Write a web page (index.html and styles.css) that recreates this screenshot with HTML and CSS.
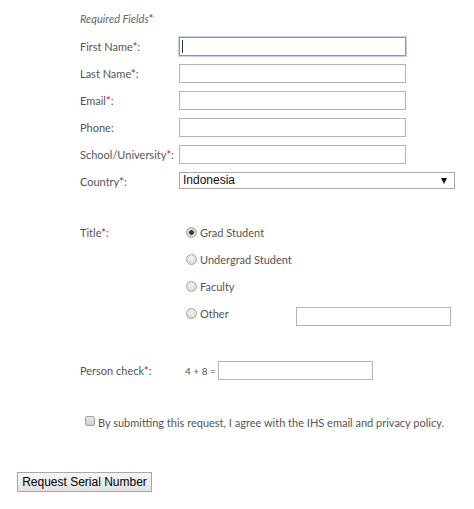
FILE: index.html
```html
<!DOCTYPE html>
<html>
<head>
<meta charset="utf-8">
<link rel="stylesheet" href="styles.css">
</head>
<body>
<div class="page">
  <div class="form">
    <p class="req">Required Fields<span class="ast">*</span></p>
    <div class="row"><label class="lbl">First Name<span class="ast">*</span>:</label><span class="focus-wrap"><input class="txt focused" type="text"></span></div>
    <div class="row"><label class="lbl">Last Name<span class="ast">*</span>:</label><input class="txt" type="text"></div>
    <div class="row"><label class="lbl">Email<span class="ast">*</span>:</label><input class="txt" type="text"></div>
    <div class="row"><label class="lbl">Phone:</label><input class="txt" type="text"></div>
    <div class="row"><label class="lbl">School/University<span class="ast">*</span>:</label><input class="txt" type="text"></div>
    <div class="row"><label class="lbl">Country<span class="ast">*</span>:</label><span class="sel-wrap"><select class="sel"><option>Indonesia</option></select></span></div>

    <div class="title-block">
      <div class="title-lbl">Title<span class="ast">*</span>:</div>
      <div class="opts">
        <label class="opt"><input type="radio" name="title" class="radio" checked>Grad Student</label>
        <label class="opt"><input type="radio" name="title" class="radio">Undergrad Student</label>
        <label class="opt"><input type="radio" name="title" class="radio">Faculty</label>
        <div class="opt other"><label class="other-lbl"><input type="radio" name="title" class="radio">Other</label><input class="txt other-txt" type="text"></div>
      </div>
    </div>

    <div class="row check-row"><label class="lbl sum-lbl">Person check<span class="ast">*</span>:</label><span class="sum">4 + 8 =</span><input class="txt sum-txt" type="text"></div>

    <label class="agree"><input type="checkbox" class="cb">By submitting this request, I agree with the IHS email and privacy policy.</label>
  </div>
  <button class="btn" type="button">Request Serial Number</button>
</div>
</body>
</html>
```
FILE: styles.css
```css
html, body {
  margin: 0;
  padding: 0;
  background: #fff;
}

.page {
  padding: 12px 0 0 17px;
  font-family: Lato, "Open Sans", sans-serif;
  font-size: 11px;
  color: #555;
}

.form {
  padding-left: 63px;
}

.req {
  margin: 0 0 11px 0;
  height: 14px;
  line-height: 14px;
  font-style: italic;
  color: #666;
}

.ast {
  color: #d0021b;
  font-style: normal;
}

.row {
  display: flex;
  align-items: center;
  height: 19px;
  margin-bottom: 8px;
}

.lbl {
  width: 99px;
  flex: none;
  line-height: 19px;
  white-space: nowrap;
}

.txt {
  box-sizing: border-box;
  width: 227px;
  height: 19px;
  margin: 0;
  padding: 0 3px;
  border: 1px solid #b4b4b4;
  background: #fff;
  outline: none;
  font: 12px "Liberation Sans", Arial, sans-serif;
}

.focus-wrap {
  position: relative;
  display: block;
  height: 19px;
}

.focused {
  border-color: #7d98cf;
  box-shadow: 0 0 0 1px #c6d2ec;
}

.focus-wrap::after {
  content: "";
  position: absolute;
  left: 3px;
  top: 3px;
  width: 1px;
  height: 13px;
  background: #333;
}

.sel-wrap {
  position: relative;
  display: block;
  align-self: flex-start;
  height: 17px;
}

.sel {
  -webkit-appearance: none;
  appearance: none;
  box-sizing: border-box;
  width: 276px;
  height: 17px;
  margin: 0;
  padding: 0 0 0 3px;
  border: 1px solid #a9a9a9;
  border-radius: 0;
  background: #fff;
  color: #111;
  font: 12px "Liberation Sans", Arial, sans-serif;
  line-height: 15px;
  outline: none;
}

.sel-wrap::after {
  content: "";
  position: absolute;
  right: 8px;
  top: 6px;
  width: 0;
  height: 0;
  border-left: 3px solid transparent;
  border-right: 3px solid transparent;
  border-top: 6px solid #111;
}

.title-block {
  display: flex;
  margin-top: 28px;
}

.title-lbl {
  width: 106px;
  flex: none;
  line-height: 27px;
}

.opts {
  display: flex;
  flex-direction: column;
}

.opt {
  display: flex;
  align-items: center;
  height: 27px;
  white-space: nowrap;
}

.radio {
  -webkit-appearance: none;
  appearance: none;
  box-sizing: border-box;
  width: 11px;
  height: 11px;
  margin: 0 3px 0 0;
  border: 1px solid #a6a6a6;
  border-radius: 50%;
  background: radial-gradient(circle at 50% 35%, #f4f4f4 0, #dcdcdc 70%, #cfcfcf 100%);
  flex: none;
}

.radio:checked {
  background: radial-gradient(circle, #3a3a3a 0, #3a3a3a 2px, #d8d8d8 2.6px, #cfcfcf 100%);
}

.other {
  align-items: flex-start;
}

.other-lbl {
  display: flex;
  align-items: center;
  width: 110px;
  height: 27px;
}

.other-txt {
  width: 155px;
  margin-top: 7px;
}

.check-row {
  margin-top: 34px;
  margin-bottom: 0;
}

.sum-lbl {
  width: 105px;
}

.sum {
  width: 33px;
  flex: none;
  font-size: 10px;
  white-space: nowrap;
}

.sum-txt {
  width: 155px;
}

.agree {
  display: flex;
  align-items: center;
  height: 16px;
  margin-top: 34px;
  padding-left: 5px;
  white-space: nowrap;
}

.cb {
  -webkit-appearance: none;
  appearance: none;
  box-sizing: border-box;
  width: 10px;
  height: 10px;
  margin: 0 3px 0 0;
  border: 1px solid #a0a0a0;
  border-radius: 2px;
  background: linear-gradient(#e8e8e8, #d0d0d0);
  flex: none;
  position: relative;
  top: -1px;
}

.btn {
  display: block;
  box-sizing: border-box;
  width: 135px;
  height: 20px;
  margin: 42px 0 0 0;
  padding: 0;
  border: 1px solid #a8a8a8;
  border-radius: 0;
  background: linear-gradient(#f6f6f6, #e2e2e2);
  color: #000;
  font: 12px "Liberation Sans", Arial, sans-serif;
}
```
